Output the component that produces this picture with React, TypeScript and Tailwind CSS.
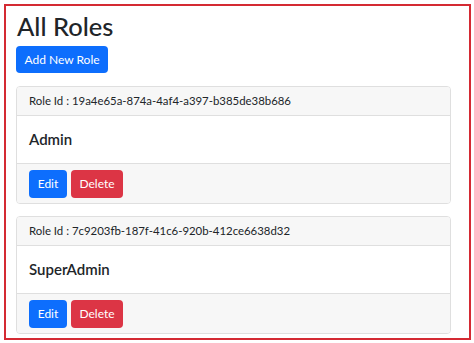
import React from 'react';

type Role = { id: string; name: string };

const roles: Role[] = [
    { id: '19a4e65a-874a-4af4-a397-b385de38b686', name: 'Admin' },
    { id: '7c9203fb-187f-41c6-920b-412ce6638d32', name: 'SuperAdmin' },
];

const RoleCard: React.FC<{ role: Role }> = ({ role }) => (
    <div className="border border-[#dfdfdf] rounded-[4px] bg-white overflow-hidden">
        <div className="bg-[#f7f7f7] border-b border-[#dfdfdf] px-[12px] h-[29px] flex items-center text-[11.4px] text-[#212529]">
            Role Id : {role.id}
        </div>
        <div className="h-[47px] px-[12px] flex items-center">
            <h5 className="text-[15px] font-semibold text-[#212529] leading-none">{role.name}</h5>
        </div>
        <div className="bg-[#f7f7f7] border-t border-[#dfdfdf] px-[12px] h-[40px] flex items-center gap-[4px]">
            <button className="bg-[#0d6efd] text-white text-[12px] rounded-[4px] h-[28px] w-[38px]">Edit</button>
            <button className="bg-[#dc3545] text-white text-[12px] rounded-[4px] h-[28px] w-[52px]">Delete</button>
        </div>
    </div>
);

export default function App() {
    return (
        <div className="w-[474px] h-[343px] bg-white p-[4px] font-['Segoe_UI','Lato','Noto_Sans',sans-serif]">
            <div className="h-[336px] w-[467px] border-2 border-[#d42a33] pl-[10px] pr-[18px] pt-[2px]">
                <h1 className="text-[25.5px] font-medium text-[#212529] leading-[36px] pl-[1px]">All Roles</h1>
                <button className="mt-[2px] bg-[#0d6efd] text-white text-[12px] rounded-[4px] h-[27px] w-[92px]">
                    Add New Role
                </button>
                <div className="mt-[13px] flex flex-col gap-[12px]">
                    {roles.map((role) => (
                        <RoleCard key={role.id} role={role} />
                    ))}
                </div>
            </div>
        </div>
    );
}
